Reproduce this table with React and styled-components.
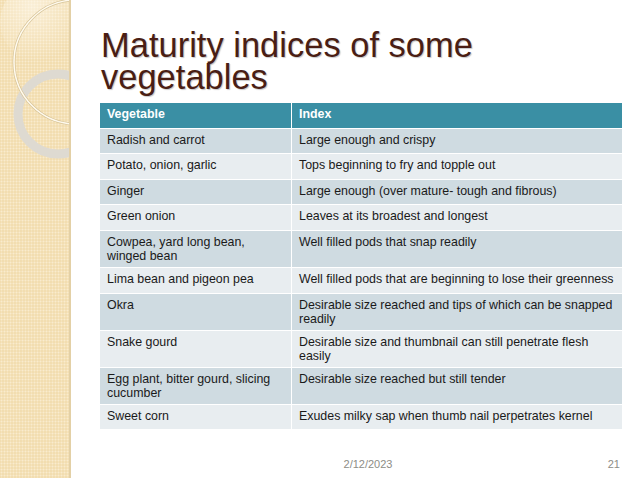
import React from "react";
import styled, { createGlobalStyle } from "styled-components";

const GlobalStyle = createGlobalStyle`
  html, body {
    margin: 0;
    padding: 0;
    background: #ffffff;
  }
  body {
    font-family: "Liberation Sans", Arial, sans-serif;
  }
`;

const rows = [
  ["Radish and carrot", "Large enough and crispy"],
  ["Potato, onion, garlic", "Tops beginning to fry and topple out"],
  ["Ginger", "Large enough (over mature- tough and fibrous)"],
  ["Green onion", "Leaves at its broadest and longest"],
  ["Cowpea, yard long bean,\nwinged bean", "Well filled pods that snap readily"],
  ["Lima bean and pigeon pea", "Well filled pods that are beginning to lose their greenness"],
  ["Okra", "Desirable size reached and tips of which can be snapped\nreadily"],
  ["Snake gourd", "Desirable size and thumbnail can still penetrate flesh\neasily"],
  ["Egg plant, bitter gourd, slicing\ncucumber", "Desirable size reached but still tender"],
  ["Sweet corn", "Exudes milky sap when thumb nail perpetrates kernel"],
];

const Slide = styled.div`
  width: 638px;
  height: 478px;
  display: flex;
  overflow: hidden;
  background: #ffffff;
`;

const Strip = styled.aside`
  width: 69px;
  flex: none;
  position: relative;
  overflow: hidden;
  border-right: 2px solid #e3d0a6;
  background-color: #f2ddb0;
  background-image: radial-gradient(circle, rgba(255, 250, 235, 0.5) 0.7px, transparent 1.2px);
  background-size: 3px 3px;
`;

const Main = styled.main`
  flex: 1;
  display: flex;
  flex-direction: column;
  padding: 29px 16px 0 29px;
`;

const Title = styled.h1`
  margin: 0 0 0 1px;
  width: 440px;
  font-family: "Liberation Sans", Arial, sans-serif;
  font-weight: 400;
  font-size: 34.5px;
  line-height: 32px;
  color: #4a1e14;
  text-shadow: 1px 1px 1px rgba(0, 0, 0, 0.22);
`;

const Table = styled.div`
  margin-top: 10px;
  display: grid;
  grid-template-columns: 191px 330px;
  gap: 1px;
  background: #ffffff;
`;

const Cell = styled.div`
  min-height: 24.6px;
  padding: 4px 2px 4px 7px;
  box-sizing: border-box;
  font-size: 12.4px;
  line-height: 14px;
  white-space: pre;
  overflow: hidden;
  color: ${(p) => (p.$head ? "#ffffff" : "#1a1a1a")};
  font-weight: ${(p) => (p.$head ? 700 : 400)};
  background: ${(p) => (p.$head ? "#3a8fa4" : p.$dark ? "#cfdbe1" : "#e8edf0")};
`;

const Footer = styled.footer`
  margin-top: auto;
  display: grid;
  grid-template-columns: 1fr auto 1fr;
  padding: 0 2px 7px 16px;
  font-size: 11px;
  line-height: 13px;
  color: #8d8d86;
`;

const PageNo = styled.span`
  justify-self: end;
`;

function Decoration() {
  return (
    <svg width="69" height="200" viewBox="0 0 69 200">
      <defs>
        <radialGradient id="glow" cx="0.4" cy="0.3" r="0.7">
          <stop offset="0" stopColor="#fffaf0" stopOpacity="0.6" />
          <stop offset="1" stopColor="#fffaf0" stopOpacity="0" />
        </radialGradient>
      </defs>
      <circle cx="40" cy="22" r="40" fill="url(#glow)" />
      <circle cx="58" cy="114" r="40" fill="none" stroke="#dedad1" strokeWidth="9" />
      <circle cx="76" cy="62" r="62" fill="none" stroke="#d6c397" strokeWidth="2.8" />
      <circle cx="76" cy="62" r="62" fill="none" stroke="#fffaee" strokeWidth="1.5" />
    </svg>
  );
}

export default function App() {
  return (
    <>
      <GlobalStyle />
      <Slide>
        <Strip>
          <Decoration />
        </Strip>
        <Main>
          <Title>Maturity indices of some vegetables</Title>
          <Table>
            <Cell $head>Vegetable</Cell>
            <Cell $head>Index</Cell>
            {rows.map(([veg, index], key) => (
              <React.Fragment key={key}>
                <Cell $dark={key % 2 === 0}>{veg}</Cell>
                <Cell $dark={key % 2 === 0}>{index}</Cell>
              </React.Fragment>
            ))}
          </Table>
          <Footer>
            <span />
            <span>2/12/2023</span>
            <PageNo>21</PageNo>
          </Footer>
        </Main>
      </Slide>
    </>
  );
}
